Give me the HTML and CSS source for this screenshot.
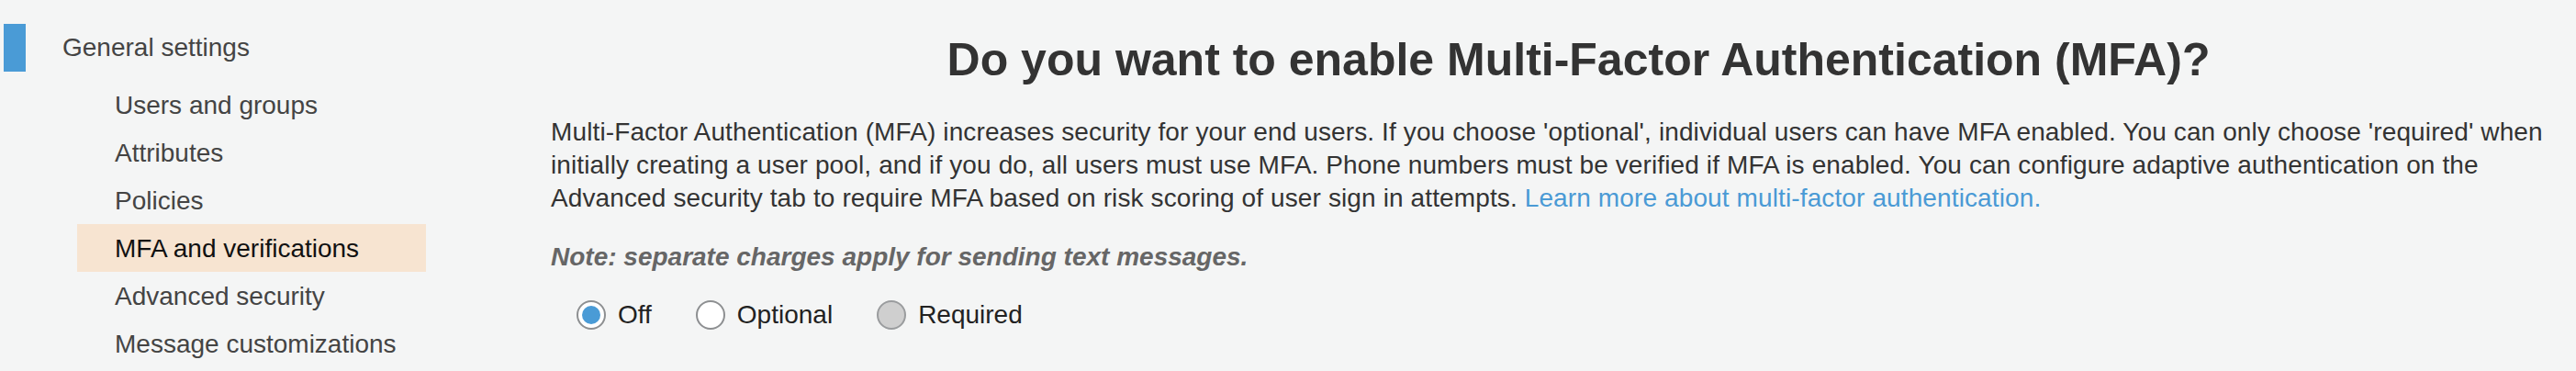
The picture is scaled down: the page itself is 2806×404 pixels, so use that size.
FILE: index.html
```html
<!DOCTYPE html>
<html lang="en">
<head>
<meta charset="utf-8">
<title>MFA and verifications</title>
<link rel="stylesheet" href="styles.css">
</head>
<body>
<div class="page">
  <nav class="sidebar">
    <div class="section">
      <span class="section-mark"></span>
      <span class="section-title">General settings</span>
    </div>
    <ul class="nav-list">
      <li class="nav-item">Users and groups</li>
      <li class="nav-item">Attributes</li>
      <li class="nav-item">Policies</li>
      <li class="nav-item active">MFA and verifications</li>
      <li class="nav-item">Advanced security</li>
      <li class="nav-item">Message customizations</li>
    </ul>
  </nav>
  <main class="content">
    <h1 class="title">Do you want to enable Multi-Factor Authentication (MFA)?</h1>
    <p class="desc">Multi-Factor Authentication (MFA) increases security for your end users. If you choose 'optional', individual users can have MFA enabled. You can only choose 'required' when<br>initially creating a user pool, and if you do, all users must use MFA. Phone numbers must be verified if MFA is enabled. You can configure adaptive authentication on the<br>Advanced security tab to require MFA based on risk scoring of user sign in attempts. <a class="link" href="#">Learn more about multi-factor authentication.</a></p>
    <p class="note">Note: separate charges apply for sending text messages.</p>
    <div class="options">
      <label class="option"><span class="radio checked"></span><span class="option-label">Off</span></label>
      <label class="option"><span class="radio"></span><span class="option-label">Optional</span></label>
      <label class="option"><span class="radio disabled"></span><span class="option-label">Required</span></label>
    </div>
  </main>
</div>
</body>
</html>
```

FILE: styles.css
```css
html, body {
  margin: 0;
  padding: 0;
}

body {
  background: #f4f5f5;
  font-family: "Liberation Sans", Arial, Helvetica, sans-serif;
  color: #333;
  width: 2806px;
  height: 404px;
  overflow: hidden;
}

.page {
  display: flex;
  align-items: flex-start;
}

.sidebar {
  width: 464px;
  flex: none;
  padding-top: 26px;
}

.section {
  display: flex;
  align-items: center;
  height: 52px;
  gap: 40px;
}

.section-mark {
  display: block;
  width: 24px;
  height: 52px;
  margin-left: 4px;
  background: #4a9bd6;
}

.section-title {
  font-size: 28px;
  line-height: 54px;
  color: #444;
}

.nav-list {
  list-style: none;
  margin: 10px 0 0 84px;
  padding: 0;
}

.nav-item {
  height: 52px;
  line-height: 54px;
  font-size: 28px;
  padding-left: 41px;
  color: #444;
  white-space: nowrap;
}

.nav-item.active {
  background: #f7e4d1;
  color: #111;
}

.content {
  flex: 1;
  margin-left: 136px;
  padding: 37px 28px 0 0;
}

.title {
  margin: 0;
  padding-left: 61px;
  font-size: 50px;
  line-height: 56px;
  font-weight: bold;
  text-align: center;
  color: #333;
}

.desc {
  margin: 33px 0 0;
  font-size: 28px;
  line-height: 36px;
  letter-spacing: 0.12px;
  color: #333;
  white-space: nowrap;
}

.link {
  color: #4a9ad5;
  text-decoration: none;
}

.note {
  margin: 28px 0 0;
  font-size: 28px;
  line-height: 36px;
  font-weight: bold;
  font-style: italic;
  color: #666;
}

.options {
  display: flex;
  margin-top: 27px;
  padding-left: 28px;
  gap: 48px;
}

.option {
  display: flex;
  align-items: center;
  gap: 13px;
  font-size: 28px;
  line-height: 36px;
  color: #222;
}

.radio {
  box-sizing: border-box;
  width: 32px;
  height: 32px;
  border-radius: 50%;
  border: 2px solid #8d8f91;
  background: #fff;
  display: flex;
  align-items: center;
  justify-content: center;
}

.radio.checked::after {
  content: "";
  width: 20px;
  height: 20px;
  border-radius: 50%;
  background: #4a9bd6;
}

.radio.disabled {
  background: #cfcfcf;
  border-color: #9a9c9e;
}
```
